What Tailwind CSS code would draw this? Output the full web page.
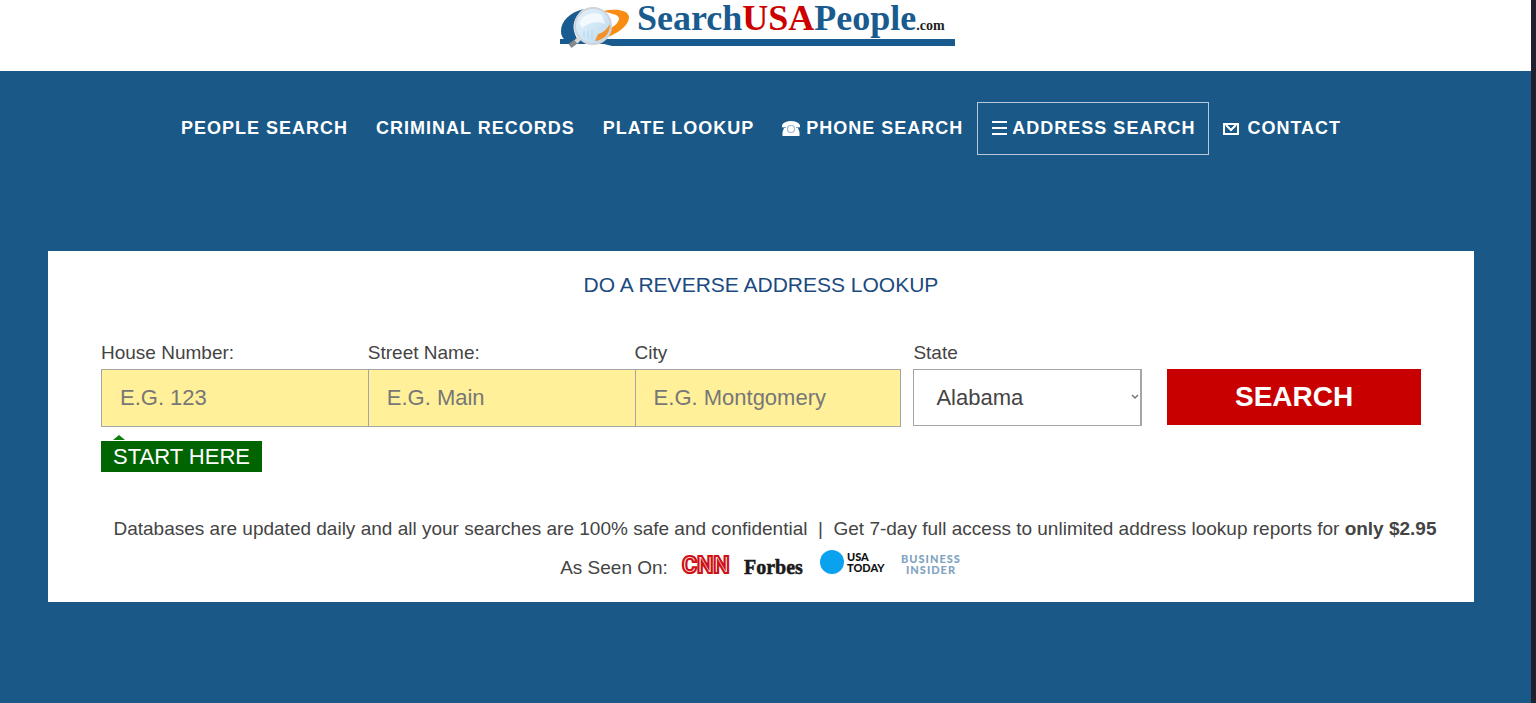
<!DOCTYPE html>
<html lang="en">
    <head>
        <title>Reverse Address Lookup - SearchUSAPeople.com</title>
        <meta charset="UTF-8" />
        <meta name="viewport" content="width=device-width, initial-scale=1.0" />
        <script src="https://cdn.jsdelivr.net/npm/@tailwindcss/browser@4"></script>
    </head>
    <body class="flex flex-col min-h-screen bg-[#195887] border-r-5 border-[#20202e] font-['Liberation_Sans',Arial,sans-serif] text-[#444]">
        <header class="flex justify-center h-[71px] bg-white pr-4">
            <a href="#" class="block" aria-label="SearchUSAPeople.com">
                <svg width="396" height="48" viewBox="0 0 396 48">
                    <defs>
                        <linearGradient id="glass" x1="0" y1="0" x2="1" y2="1">
                            <stop offset="0" stop-color="#e3f0f8" />
                            <stop offset="0.5" stop-color="#d3e8f6" />
                            <stop offset="1" stop-color="#b5d9f0" />
                        </linearGradient>
                    </defs>
                    <!-- underline bar -->
                    <path d="M0 39H395V46H52L44 44H0z" fill="#195b8f" />
                    <!-- swoosh -->
                    <path d="M24 9C10 12 1 21 1 31C1 36 3 39 7 41L18 40C14 34 12 26 15 20C17 15 20 11 24 9z" fill="#195b8f" />
                    <path d="M43 11C55 8 69 10 69 17C69 27 54 36 37 41L40 33C50 30 60 23 59 18C58 14 51 14 43 11z" fill="#f98d13" />
                    <!-- magnifier -->
                    <circle cx="33" cy="26" r="18" fill="url(#glass)" stroke="#cfd4dc" stroke-width="2" />
                    <path d="M19 23C23 14 33 11 42 15L45 24C37 20 28 23 22 28z" fill="#fff" opacity="0.7" />
                    <path d="M50 24C50 34 44 40 35 41L38 34C43 33 47 29 50 24z" fill="#f3922a" />
                    <path d="M28 31V39M32 30V40M24 31V37" stroke="#b3d6ee" stroke-width="1" />
                    <path d="M18 40L10 46" stroke="#85898d" stroke-width="5" />
                    <path d="M21 37L16 42" stroke="#d8dade" stroke-width="4" />
                    <text x="77" y="30" font-family="'Liberation Serif', 'Times New Roman', serif" font-weight="700" font-size="36" fill="#195b8f">Search<tspan fill="#cc0000">USA</tspan>People<tspan font-size="14" fill="#222">.com</tspan></text>
                </svg>
            </a>
        </header>

        <main class="pl-12 pr-[57px]">
            <nav class="flex justify-center mt-[31px] text-[18px] font-bold tracking-[1px] text-white whitespace-nowrap">
                <a href="#" class="flex items-center h-[53px] px-[13px] border border-transparent">PEOPLE SEARCH</a>
                <a href="#" class="flex items-center h-[53px] px-[13px] border border-transparent">CRIMINAL RECORDS</a>
                <a href="#" class="flex items-center h-[53px] px-[13px] border border-transparent">PLATE LOOKUP</a>
                <a href="#" class="flex items-center gap-1.5 h-[53px] px-[13px] border border-transparent">
                    <svg width="18" height="16" viewBox="0 0 18 16">
                        <path d="M0 6V4C2 1 5 0 9 0C13 0 16 1 18 4V6L16 7L17.500 11V15H0.500V11L2 7z" fill="#fff" />
                        <path d="M0.500 6.500H4M14 6.500H17.500" stroke="#7d9fbb" stroke-width="1" />
                        <circle cx="9" cy="8" r="3.500" fill="#fff" stroke="#9db8cf" stroke-width="1.200" />
                    </svg>
                    PHONE SEARCH
                </a>
                <a href="#" class="flex items-center gap-1 h-[53px] px-[13px] border border-[#b9c9da]">
                    <svg width="17" height="15" viewBox="0 0 17 15">
                        <path d="M1 1H16M1 7H16M1 13H16" stroke="#fff" stroke-width="2" />
                    </svg>
                    ADDRESS SEARCH
                </a>
                <a href="#" class="flex items-center gap-2 h-[53px] px-[13px] border border-transparent">
                    <svg width="16" height="12" viewBox="0 0 16 12">
                        <rect x="1" y="1" width="14" height="10" fill="none" stroke="#fff" stroke-width="2" />
                        <path d="M3 2L8 7L13 2" fill="none" stroke="#fff" stroke-width="2" />
                    </svg>
                    CONTACT
                </a>
            </nav>

            <section class="mt-24 bg-white pt-5 pb-[17px]">
                <h1 class="text-center text-[21px] leading-7 text-[#1b4a80]">DO A REVERSE ADDRESS LOOKUP</h1>

                <form class="flex items-start mt-10 px-[53px]">
                    <div class="flex-[267]">
                        <label for="house" class="block h-[30px] text-[19px] leading-7">House Number:</label>
                        <input id="house" type="text" placeholder="E.G. 123" class="block w-full h-[58px] px-[18px] bg-[#fff099] border border-r-0 border-[#a5a5a5] text-[22px] placeholder:text-[#777]" />
                        <div class="ml-3 mt-2 w-0 h-0 border-x-6 border-b-5 border-x-transparent border-b-[#0b800b]"></div>
                        <div class="mt-px w-[161px] bg-[#006400] text-center text-[22px] leading-[31px] text-white">START HERE</div>
                    </div>
                    <div class="flex-[267]">
                        <label for="street" class="block h-[30px] text-[19px] leading-7">Street Name:</label>
                        <input id="street" type="text" placeholder="E.G. Main" class="block w-full h-[58px] px-[18px] bg-[#fff099] border border-r-0 border-[#a5a5a5] text-[22px] placeholder:text-[#777]" />
                    </div>
                    <div class="flex-[267]">
                        <label for="city" class="block h-[30px] text-[19px] leading-7">City</label>
                        <input id="city" type="text" placeholder="E.G. Montgomery" class="block w-full h-[58px] px-[18px] bg-[#fff099] border border-[#a5a5a5] text-[22px] placeholder:text-[#777]" />
                    </div>
                    <div class="flex-[229] ml-3">
                        <label for="state" class="block h-[30px] text-[19px] leading-7">State</label>
                        <div class="relative">
                            <select id="state" class="block w-full h-[57px] px-[22px] appearance-none bg-white border border-r-2 border-[#a5a5a5] text-[22px]">
                                <option>Alabama</option>
                                <option>Alaska</option>
                                <option>Arizona</option>
                                <option>Arkansas</option>
                                <option>California</option>
                            </select>
                            <svg class="absolute right-[3px] top-[25px] pointer-events-none" width="8" height="6" viewBox="0 0 8 6">
                                <path d="M1 1L4 4L7 1" fill="none" stroke="#777" stroke-width="1.500" />
                            </svg>
                        </div>
                    </div>
                    <button type="submit" class="flex-[254] ml-[25px] mt-[30px] h-14 bg-[#c80000] text-[28px] font-bold text-white">SEARCH</button>
                </form>

                <p class="mt-[43px] pl-12 pr-5 text-center text-[19px] leading-7">Databases are updated daily and all your searches are 100% safe and confidential &nbsp;|&nbsp; Get 7-day full access to unlimited address lookup reports for <b>only $2.95</b></p>
                <div class="flex justify-center mt-1 text-[19px] leading-[34px]">
                    <span class="pt-1">As Seen On:</span>
                    <svg class="ml-3" width="282" height="34" viewBox="0 0 282 34">
                        <text x="2" y="26" font-family="Roboto, sans-serif" font-weight="700" font-size="23" fill="#fff" stroke="#cf1218" stroke-width="2.200">CNN</text>
                        <text x="64" y="27" font-family="'Liberation Serif', serif" font-weight="700" font-size="20" fill="#1a1a1a" stroke="#1a1a1a" stroke-width="0.500">Forbes</text>
                        <circle cx="152" cy="15" r="12" fill="#0aa2ee" />
                        <text x="167" y="14" font-family="Lato, sans-serif" font-weight="900" font-size="11" fill="#111">USA</text>
                        <text x="167" y="25" font-family="Lato, sans-serif" font-weight="900" font-size="11" fill="#111">TODAY</text>
                        <text x="221" y="16" font-family="Lato, sans-serif" font-weight="900" font-size="11" letter-spacing="1" fill="#7fa3c0">BUSINESS</text>
                        <text x="226" y="27" font-family="Lato, sans-serif" font-weight="900" font-size="11" letter-spacing="1" fill="#7fa3c0">INSIDER</text>
                    </svg>
                </div>
            </section>
        </main>
    </body>
</html>
